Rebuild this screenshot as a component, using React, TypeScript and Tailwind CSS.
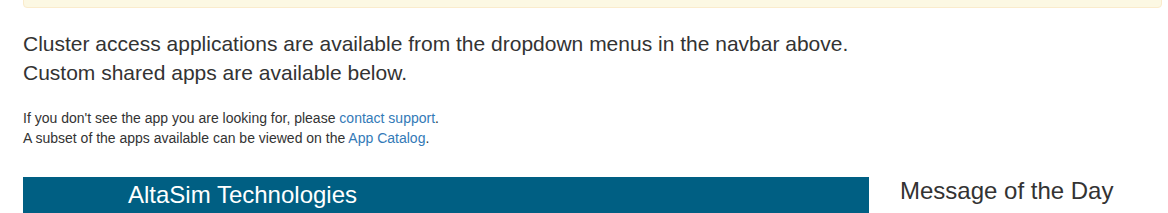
export default function App() {
  return (
    <div className="w-[1168px] h-[213px] overflow-hidden bg-white font-['Liberation_Sans',Arial,sans-serif] text-[#333] text-[14px] leading-[20px]">
      <div className="pl-[23px] pr-[6px]">
        {/* Alert */}
        <div className="-mt-[40px] h-[48px] bg-[#fcf8e3] border border-[#faebcc] rounded mb-[21px]" />

        {/* Intro */}
        <p className="text-[21px] leading-[29.4px] font-light mb-[20px]">
          Cluster access applications are available from the dropdown menus in the navbar above.
          <br />
          Custom shared apps are available below.
        </p>
        <p className="mb-[29px]">
          If you don't see the app you are looking for, please{' '}
          <a href="#" className="text-[#337ab7]">contact support</a>.
          <br />
          A subset of the apps available can be viewed on the{' '}
          <a href="#" className="text-[#337ab7]">App Catalog</a>.
        </p>

        {/* Columns */}
        <div className="flex">
          <div className="w-[846px] shrink-0">
            <div className="bg-[#005f83] h-[60px] pl-[105px] pt-[4px]">
              <h2 className="text-white text-[24px] leading-[28px]">AltaSim Technologies</h2>
            </div>
          </div>
          <div className="pl-[31px]">
            <h3 className="text-[24px] leading-[26px] mt-[1px]">Message of the Day</h3>
          </div>
        </div>
      </div>
    </div>
  );
}
